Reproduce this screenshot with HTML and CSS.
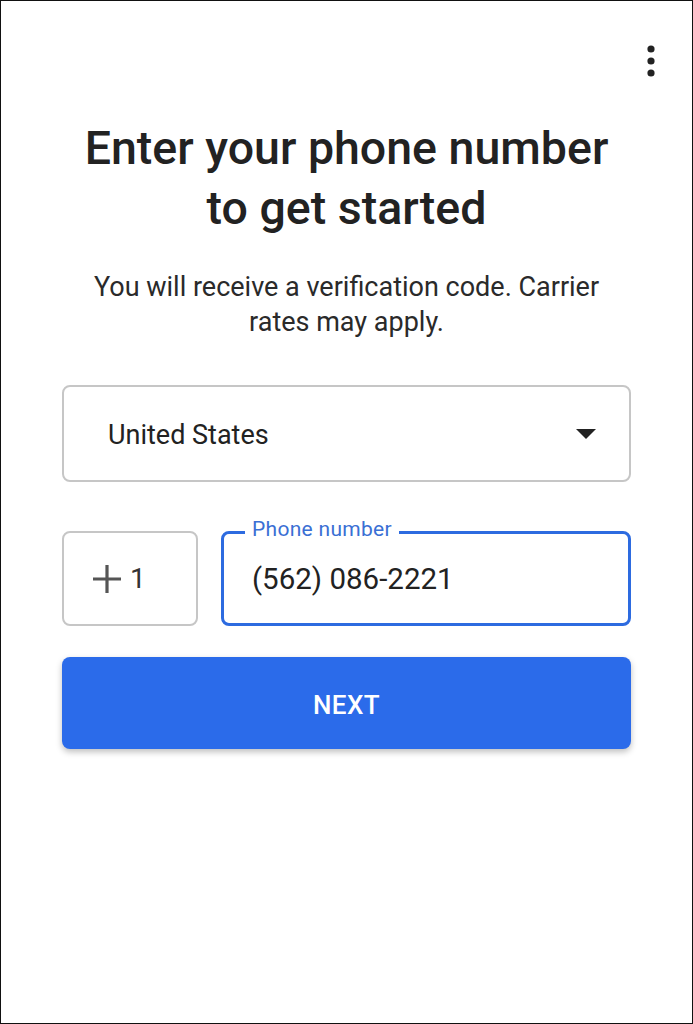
FILE: index.html
```html
<!DOCTYPE html>
<html lang="en">
<head>
  <meta charset="UTF-8">
  <meta name="viewport" content="width=device-width, initial-scale=1.0">
  <title>Sign in - Phone number</title>
  <link rel="stylesheet" href="styles.css">
</head>
<body>
  <div class="screen">
    <div class="top-bar">
      <button class="menu-btn" aria-label="More options">
        <svg width="12" height="34" viewBox="0 0 12 34">
          <circle cx="6" cy="5" r="3.6"/>
          <circle cx="6" cy="17" r="3.6"/>
          <circle cx="6" cy="29" r="3.6"/>
        </svg>
      </button>
    </div>

    <h1 class="title">Enter your phone number to get started</h1>
    <p class="subtitle">You will receive a verification code. Carrier rates may apply.</p>

    <div class="select-box">
      <span class="select-value">United States</span>
      <svg class="caret" width="20" height="10" viewBox="0 0 20 10">
        <path d="M0 0h20L10 10z"/>
      </svg>
    </div>

    <div class="phone-row">
      <div class="code-box">
        <svg class="plus" width="30" height="30" viewBox="0 0 30 30">
          <path d="M15 1v28M1 15h28"/>
        </svg>
        <span class="code-value">1</span>
      </div>
      <div class="phone-field">
        <label class="phone-label">Phone number</label>
        <span class="phone-value">(562) 086-2221</span>
      </div>
    </div>

    <button class="next-btn">NEXT</button>
  </div>
</body>
</html>
```

FILE: styles.css
```css
* {
  box-sizing: border-box;
}
body {
  margin: 0;
  font-family: Roboto, "Noto Sans", Arial, sans-serif;
  color: #222;
  background: #fff;
}
.screen {
  height: 1024px;
  border: 1px solid #111;
  padding: 0 61px;
}
.top-bar {
  height: 88px;
  display: flex;
  justify-content: flex-end;
  padding-top: 43px;
  margin-right: -26px;
}
.menu-btn {
  background: none;
  border: none;
  padding: 0;
  width: 12px;
  height: 34px;
  fill: #222;
}
.title {
  font-size: 46.5px;
  font-weight: 500;
  line-height: 60px;
  text-align: center;
  max-width: 540px;
  margin: 29px auto 0;
  color: #222;
}
.subtitle {
  font-size: 27px;
  line-height: 35px;
  text-align: center;
  max-width: 540px;
  margin: 32px auto 0;
  color: #2a2a2a;
}
.select-box {
  margin-top: 45px;
  height: 97px;
  border: 2px solid #c6c6c6;
  border-radius: 8px;
  display: flex;
  align-items: center;
  justify-content: space-between;
  padding: 3px 33px 0 44px;
}
.select-value {
  font-size: 27px;
  color: #222;
}
.caret {
  fill: #222;
  margin-top: -3px;
}
.phone-row {
  margin-top: 49px;
  display: flex;
  gap: 23px;
  height: 95px;
}
.code-box {
  width: 136px;
  border: 2px solid #c6c6c6;
  border-radius: 8px;
  display: flex;
  align-items: center;
  padding-left: 28px;
  gap: 8px;
}
.plus {
  stroke: #555;
  stroke-width: 3.2;
}
.code-value {
  font-size: 28px;
  color: #333;
}
.phone-field {
  position: relative;
  flex: 1;
  border: 3px solid #2d6be0;
  border-radius: 8px;
  display: flex;
  align-items: center;
  padding-left: 28px;
}
.phone-label {
  position: absolute;
  top: -17px;
  left: 21px;
  padding: 0 7px;
  background: #fff;
  color: #3a6fd4;
  font-size: 21px;
  line-height: 24px;
  letter-spacing: 0.3px;
}
.phone-value {
  font-size: 29.5px;
  color: #222;
}
.next-btn {
  display: block;
  width: 100%;
  margin-top: 31px;
  height: 92px;
  border: none;
  border-radius: 8px;
  background: #2b6bea;
  color: #fff;
  font-family: Roboto, "Noto Sans", Arial, sans-serif;
  font-size: 26px;
  font-weight: 500;
  letter-spacing: 0.4px;
  padding-top: 4px;
  box-shadow: 0 3px 6px rgba(0, 0, 0, 0.25);
  cursor: pointer;
}
```
